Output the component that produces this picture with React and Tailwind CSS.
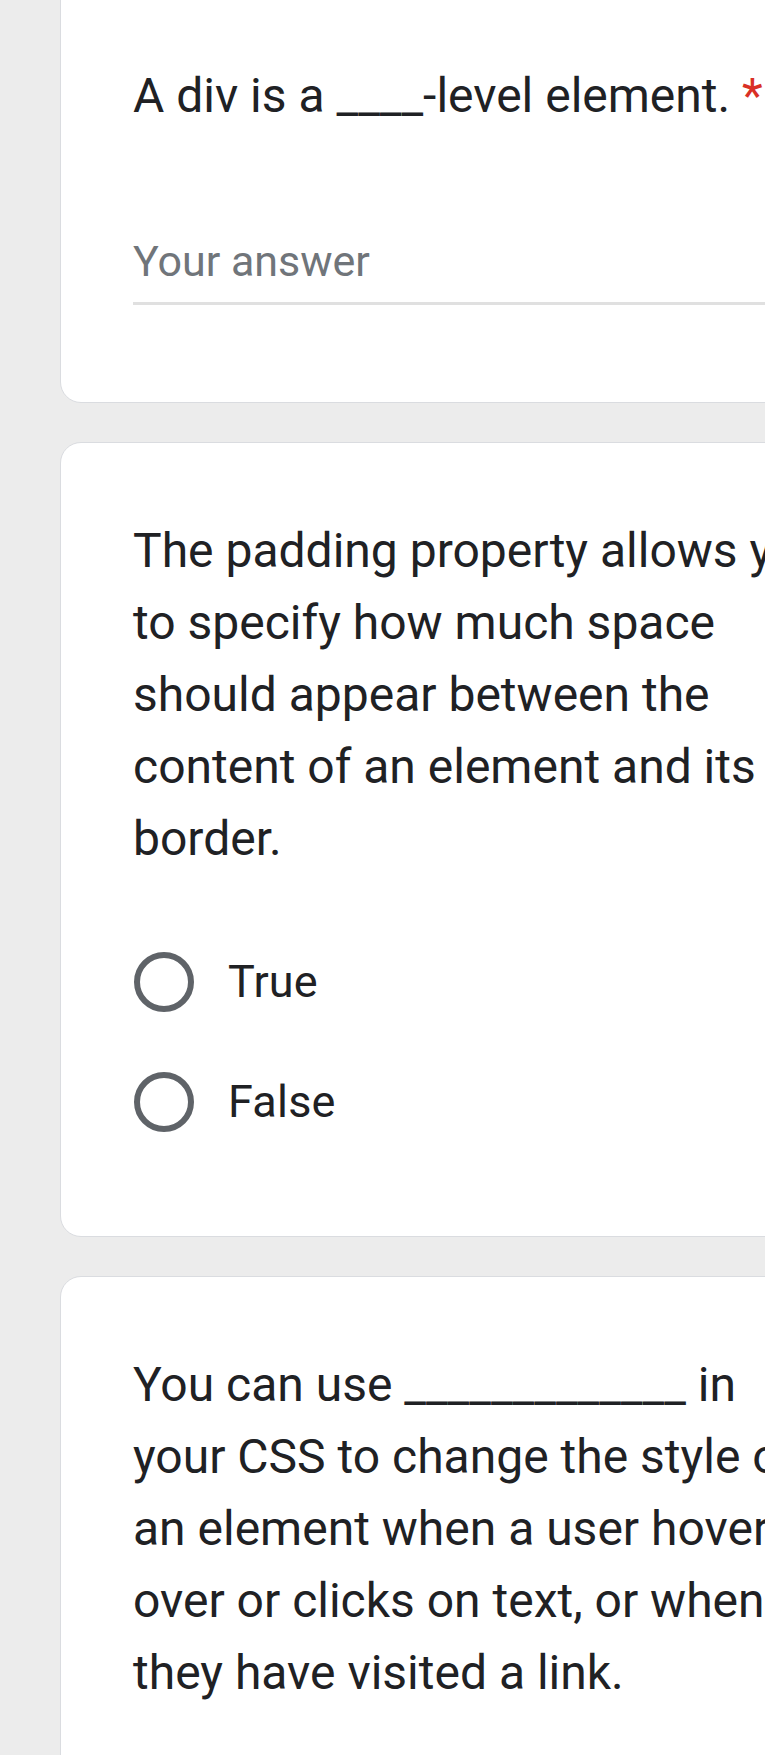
import React from 'react';

const Card = ({ children, className = '' }) => (
  <div className={`w-[860px] bg-white border border-[#dadce0] rounded-[21px] px-[72px] ${className}`}>
    {children}
  </div>
);

const Radio = ({ label }) => (
  <label className="flex items-center h-[120px]">
    <span className="w-[60px] h-[60px] rounded-full border-[6px] border-[#5f6368] shrink-0 ml-[1px]" />
    <span className="ml-[34px] text-[45px] leading-[60px] text-[#202124] tracking-[0.2px]">{label}</span>
  </label>
);

const App = () => {
  return (
    <div
      className="w-[765px] h-[1755px] overflow-hidden bg-[#ececec] pl-[60px]"
      style={{ fontFamily: 'Roboto, "Noto Sans", sans-serif' }}
    >
      <div className="flex flex-col gap-[39px] -mt-[30px]">
        <Card className="pt-[89px] pb-[97px]">
          <div className="text-[48px] leading-[72px] text-[#202124] whitespace-nowrap">
            A div is a ____-level element. <span className="text-[#d93025]">*</span>
          </div>
          <div className="mt-[98px]">
            <div className="text-[43px] leading-[63px] text-[#70757a] pb-[9px]">Your answer</div>
            <div className="h-[3px] bg-[#e0e0e0]" />
          </div>
        </Card>

        <Card className="pt-[72px] pb-[74px]">
          <div className="text-[48px] leading-[72px] text-[#202124] whitespace-nowrap">
            The padding property allows you
            <br />
            to specify how much space
            <br />
            should appear between the
            <br />
            content of an element and its
            <br />
            border.
          </div>
          <div className="mt-[47px] flex flex-col">
            <Radio label="True" />
            <Radio label="False" />
          </div>
        </Card>

        <Card className="pt-[72px] pb-[72px]">
          <div className="text-[48px] leading-[72px] text-[#202124] whitespace-nowrap">
            You can use _____________ in
            <br />
            your CSS to change the style of
            <br />
            an element when a user hovers
            <br />
            over or clicks on text, or when
            <br />
            they have visited a link.
          </div>
        </Card>
      </div>
    </div>
  );
};

export default App;
